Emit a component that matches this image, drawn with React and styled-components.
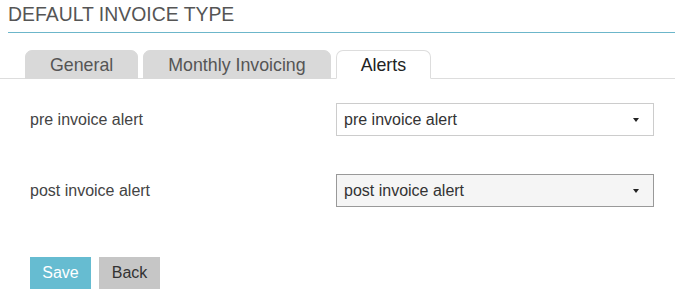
import React, { useState } from "react";
import styled, { createGlobalStyle } from "styled-components";

const GlobalStyle = createGlobalStyle`
  body {
    margin: 0;
    background: #fff;
    font-family: "Liberation Sans", Arial, sans-serif;
  }
`;

const TABS = ["General", "Monthly Invoicing", "Alerts"];

const ALERTS = [
  { id: "pre", label: "pre invoice alert", focused: false },
  { id: "post", label: "post invoice alert", focused: true },
];

const App = () => {
  const [activeTab, setActiveTab] = useState("Alerts");

  return (
    <Page>
      <GlobalStyle />
      <Header>
        <Title>Default Invoice Type</Title>
      </Header>

      <TabBar>
        {TABS.map((tab) => (
          <Tab
            key={tab}
            $active={tab === activeTab}
            onClick={() => setActiveTab(tab)}
          >
            {tab}
          </Tab>
        ))}
      </TabBar>

      <Form>
        {ALERTS.map((alert) => (
          <Row key={alert.id}>
            <Label htmlFor={alert.id}>{alert.label}</Label>
            <Select id={alert.id} $focused={alert.focused}>
              <span>{alert.label}</span>
              <Caret />
            </Select>
          </Row>
        ))}

        <Actions>
          <Button $primary>Save</Button>
          <Button>Back</Button>
        </Actions>
      </Form>
    </Page>
  );
};

const Page = styled.div`
  width: 675px;
`;

const Header = styled.div`
  margin-left: 8px;
  padding-top: 3px;
  padding-bottom: 7px;
  border-bottom: 1px solid #6cb6ca;
`;

const Title = styled.h1`
  margin: 0;
  font-size: 19.4px;
  line-height: 22px;
  font-weight: normal;
  text-transform: uppercase;
  color: #555;
`;

const TabBar = styled.div`
  display: flex;
  gap: 5px;
  margin-top: 17px;
  padding-left: 25px;
  border-bottom: 1px solid #ddd;
`;

const Tab = styled.div`
  height: 27px;
  margin-bottom: -1px;
  padding: 0 24px;
  border: 1px solid ${({ $active }) => ($active ? "#ddd" : "#d9d9d9")};
  border-bottom-color: ${({ $active }) => ($active ? "#fff" : "#d9d9d9")};
  border-radius: 7px 7px 0 0;
  background: ${({ $active }) => ($active ? "#fff" : "#d9d9d9")};
  color: ${({ $active }) => ($active ? "#222" : "#555")};
  font-size: 17.8px;
  line-height: 29px;
  cursor: pointer;
`;

const Form = styled.div`
  display: flex;
  flex-direction: column;
  padding: 24px 0 0 30px;
`;

const Row = styled.div`
  display: flex;
  align-items: center;
  margin-bottom: 38px;
`;

const Label = styled.label`
  width: 306px;
  font-size: 16px;
  color: #444;
`;

const Select = styled.div`
  display: flex;
  align-items: center;
  justify-content: space-between;
  box-sizing: border-box;
  width: 318px;
  height: 33px;
  padding: 0 14px 0 7px;
  border: 1px solid ${({ $focused }) => ($focused ? "#999" : "#ccc")};
  background: ${({ $focused }) => ($focused ? "#f5f5f5" : "#fff")};
  font-size: 16px;
  color: #333;
`;

const Caret = styled.span`
  width: 0;
  height: 0;
  border-left: 3.5px solid transparent;
  border-right: 3.5px solid transparent;
  border-top: 4px solid #222;
`;

const Actions = styled.div`
  display: flex;
  gap: 8px;
  margin-top: 12px;
`;

const Button = styled.button`
  width: 61px;
  height: 32px;
  padding: 0;
  border: none;
  border-radius: 0;
  background: ${({ $primary }) => ($primary ? "#66bcd1" : "#c6c6c6")};
  color: ${({ $primary }) => ($primary ? "#fff" : "#333")};
  font-family: inherit;
  font-size: 16px;
  cursor: pointer;
`;

export default App;
